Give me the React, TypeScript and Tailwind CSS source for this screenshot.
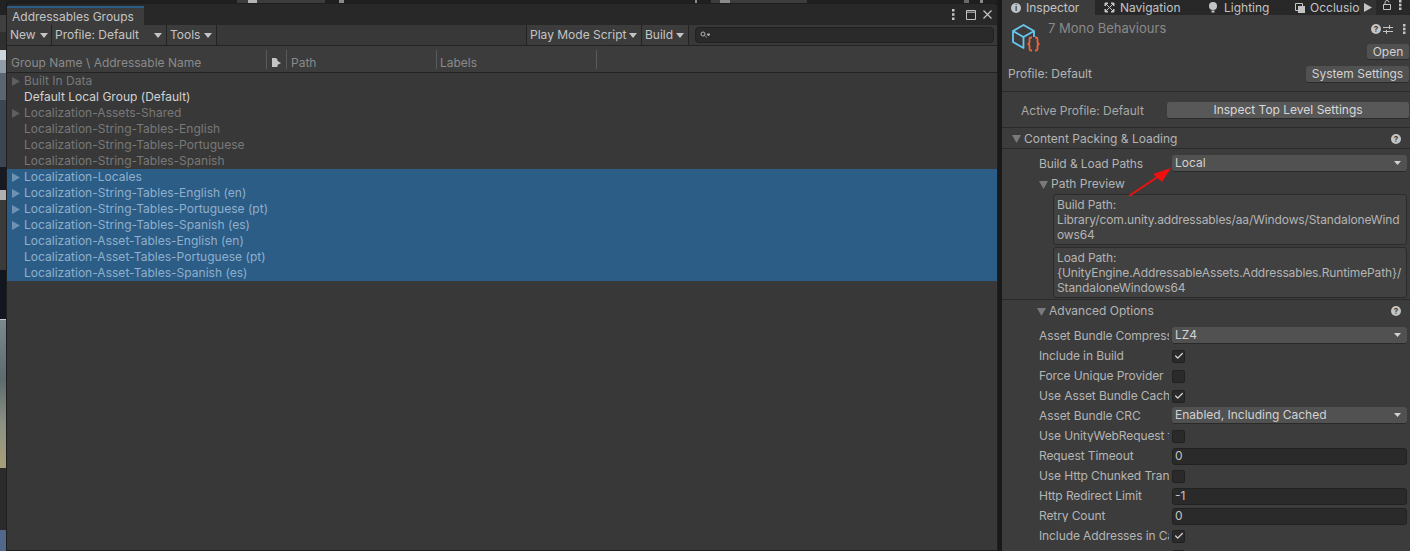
import type { ReactNode } from 'react';
import { Check } from 'lucide-react';

const font = { fontFamily: 'Inter, "Noto Sans", sans-serif' };

function Caret({ className = '', small }: { className?: string; small?: boolean }) {
  return (
    <svg width={small ? 7 : 8} height={small ? 4 : 5} viewBox="0 0 8 5" preserveAspectRatio="none" className={`shrink-0 ${className}`}>
      <path d="M0 0h8L4 5z" fill="currentColor" />
    </svg>
  );
}

function Foldout({ open, className = '' }: { open?: boolean; className?: string }) {
  return (
    <svg width="9" height="9" viewBox="0 0 9 9" className={`shrink-0 ${className}`}>
      <path d={open ? 'M0 1h9L4.5 9z' : 'M0 0l8 4.5L0 9z'} fill="currentColor" />
    </svg>
  );
}

function HelpIcon() {
  return (
    <span className="flex h-[10px] w-[10px] items-center justify-center rounded-full bg-[#c4c4c4] text-[8px] font-bold leading-none text-[#3c3c3c]">
      ?
    </span>
  );
}

function ToolButton({ label, width, spread }: { label: string; width: string; spread?: boolean }) {
  return (
    <div className={`flex h-full items-center border-r border-[#232323] bg-[#3c3c3c] pl-[3px] pr-[4px] text-[#c4c4c4] ${width} ${spread ? 'justify-between' : 'gap-[4px]'}`}>
      <span>{label}</span>
      <Caret />
    </div>
  );
}

const groups = [
  { name: 'Built In Data', arrow: true },
  { name: 'Default Local Group (Default)', bright: true },
  { name: 'Localization-Assets-Shared', arrow: true },
  { name: 'Localization-String-Tables-English' },
  { name: 'Localization-String-Tables-Portuguese' },
  { name: 'Localization-String-Tables-Spanish' },
  { name: 'Localization-Locales', arrow: true, selected: true },
  { name: 'Localization-String-Tables-English (en)', arrow: true, selected: true },
  { name: 'Localization-String-Tables-Portuguese (pt)', arrow: true, selected: true },
  { name: 'Localization-String-Tables-Spanish (es)', arrow: true, selected: true },
  { name: 'Localization-Asset-Tables-English (en)', selected: true },
  { name: 'Localization-Asset-Tables-Portuguese (pt)', selected: true },
  { name: 'Localization-Asset-Tables-Spanish (es)', selected: true },
];

function GroupRow({ name, arrow, bright, selected }: { name: string; arrow?: boolean; bright?: boolean; selected?: boolean }) {
  return (
    <div className={`flex h-4 items-center ${selected ? 'bg-[#2c5d87] text-[#8fb0cc]' : bright ? 'text-[#d2d2d2]' : 'text-[#787878]'}`}>
      <div className="flex w-[17px] pl-[5px]">
        {arrow && <Foldout className={selected ? 'text-[#6d93b4]' : 'text-[#5f5f5f]'} />}
      </div>
      <span className="tracking-[0.02px]">{name}</span>
    </div>
  );
}

function Tab({ label, icon, active, width }: { label: string; icon: ReactNode; active?: boolean; width: string }) {
  return (
    <div className={`flex h-full shrink-0 items-center gap-[5px] overflow-hidden pl-[9px] text-[#c4c4c4] ${width} ${active ? 'bg-[#3c3c3c]' : 'bg-[#282828]'}`}>
      {icon}
      <span className="whitespace-nowrap">{label}</span>
    </div>
  );
}

function Label({ children }: { children: ReactNode }) {
  return <div className="mr-[3px] w-[130px] shrink-0 overflow-hidden whitespace-nowrap tracking-[-0.1px] text-[#b4b4b4]">{children}</div>;
}

function Select({ value }: { value: string }) {
  return (
    <div className="-mt-[2px] flex h-[17px] flex-1 items-center justify-between rounded-[3px] border-b border-[#2a2a2a] bg-[#515151] pl-[3px] pr-[6px] text-[#d2d2d2]">
      <span>{value}</span>
      <Caret small className="text-[#d2d2d2]" />
    </div>
  );
}

function Toggle({ on }: { on?: boolean }) {
  return (
    <div className="flex h-[13px] w-[13px] items-center justify-center rounded-[2px] border border-[#212121] bg-[#2a2a2a]">
      {on && <Check size={10} strokeWidth={3} className="text-[#d8d8d8]" />}
    </div>
  );
}

function NumberField({ value }: { value: string }) {
  return (
    <div className="flex h-[17px] flex-1 items-center rounded-[3px] border border-[#212121] bg-[#2a2a2a] pl-[2px] text-[#c4c4c4]">
      {value}
    </div>
  );
}

function Row({ label, children }: { label: string; children: ReactNode }) {
  return (
    <div className="flex h-5 shrink-0 items-center pl-[37px] pr-[3px]">
      <Label>{label}</Label>
      <div className="flex min-w-0 flex-1 items-center">{children}</div>
    </div>
  );
}

function PathBox({ lines }: { lines: string[] }) {
  return (
    <div className="ml-[51px] mr-[3px] flex h-[51px] flex-col justify-center rounded-[3px] border border-[#2b2b2b] bg-[#414141] pl-[3px] leading-[15px] tracking-[-0.12px] text-[#b4b4b4]">
      {lines.map((line) => (
        <div key={line} className="whitespace-nowrap">{line}</div>
      ))}
    </div>
  );
}

export default function App() {
  return (
    <div style={font} className="relative flex h-[551px] w-[1410px] overflow-hidden bg-[#191919] text-[12px] leading-none">
      {/* scene view peeking out on the left */}
      <div className="flex w-[6px] shrink-0 flex-col">
        <div className="h-[15px] bg-[#222222]" />
        <div className="h-[17px] bg-[#404040]" />
        <div className="h-[18px] bg-[#303030]" />
        <div className="h-[10px] bg-[#cdd6dc]" />
        <div className="h-[13px] bg-[#8f9ca6]" />
        <div className="h-[27px] bg-[#5a6570]" />
        <div className="h-[67px] bg-[#3c4652]" />
        <div className="h-[23px] bg-[#171a22]" />
        <div className="h-[10px] bg-[#b0b0b0]" />
        <div className="h-[70px] bg-[#3a3a3a]" />
        <div className="h-[49px] bg-[#12161f]" />
        <div className="h-[1px] bg-[#c9c9c9]" />
        <div className="h-[148px] bg-[linear-gradient(180deg,#7b8a8c,#5c6b6e_40%,#8b9184_70%,#a89f78)]" />
        <div className="h-[62px] bg-[#2b2b2b]" />
        <div className="flex-1 bg-[#51688a]" />
      </div>

      {/* Addressables Groups window */}
      <div className="flex w-[992px] shrink-0 flex-col">
        <div className="flex h-[3px] shrink-0 overflow-hidden bg-[#1f1f1f] pl-[231px]">
          <div className="h-full w-[88px] bg-[#3c3c3c] pl-[11px]">
            <div className="h-full w-[9px] bg-[#b4b4b4]" />
          </div>
          <div className="ml-[14px] h-full w-[5px] bg-[#8a8a8a]" />
          <div className="ml-[351px] h-full w-[2px] bg-[#8a8a8a]" />
          <div className="ml-[14px] h-full w-[96px] bg-[#3c3c3c] pl-[9px]">
            <div className="h-full w-[10px] bg-[#8a8a8a]" />
          </div>
          <div className="ml-[157px] h-full w-[5px] bg-[#6a6a6a]" />
          <div className="ml-[11px] h-full w-[3px] bg-[#8a8a8a]" />
        </div>
        <div className="flex flex-1 flex-col overflow-hidden rounded-t-[5px] border border-[#1e1e1e] bg-[#383838]">
          <div className="flex h-[21px] shrink-0 bg-[#282828]">
            <div className="mt-[2px] flex w-[137px] flex-col bg-[#3c3c3c] text-[#c4c4c4]">
              <div className="h-[2px] bg-[#2c5d87]" />
              <div className="flex flex-1 items-center pl-[5px]">Addressables Groups</div>
            </div>
            <div className="ml-auto flex items-center gap-[7px] pr-[5px] text-[#c4c4c4]">
              <svg width="3" height="11" viewBox="0 0 3 11"><path d="M0 0h2.500v2.500H0zM0 4.200h2.500v2.500H0zM0 8.400h2.500v2.500H0z" fill="currentColor" /></svg>
              <svg width="10" height="10" viewBox="0 0 10 10" className="ml-[4px]"><path d="M.5.5h9v9h-9zM.5 2.200h9" fill="none" stroke="currentColor" /></svg>
              <svg width="9" height="9" viewBox="0 0 9 9"><path d="M.5.5l8 8M8.500.5l-8 8" stroke="currentColor" strokeWidth="1.200" /></svg>
            </div>
          </div>
          <div className="flex h-[21px] shrink-0 items-stretch border-b border-[#232323] bg-[#383838]">
            <ToolButton label="New" width="w-[45px]" />
            <ToolButton label="Profile: Default" width="w-[115px]" spread />
            <ToolButton label="Tools" width="w-[50px]" />
            <div className="ml-[309px] flex h-full w-[116px] items-center gap-[3px] border-x border-[#232323] bg-[#3c3c3c] pl-[3px] text-[#c4c4c4]">
              <span>Play Mode Script</span>
              <Caret />
            </div>
            <div className="flex h-full w-[47px] items-center gap-[3px] border-r border-[#232323] bg-[#3c3c3c] pl-[3px] text-[#c4c4c4]">
              <span>Build</span>
              <Caret />
            </div>
            <div className="my-[2px] ml-[6px] mr-[3px] flex flex-1 items-center rounded-[4px] border border-[#212121] bg-[#2a2a2a] pl-[4px] text-[#b4b4b4]">
              <svg width="10" height="8" viewBox="0 0 10 8"><circle cx="3" cy="3" r="2" fill="none" stroke="currentColor" /><path d="M4.500 4.500L7 6.500M7 3h3L8.500 5z" stroke="currentColor" strokeWidth=".7" fill="currentColor" /></svg>
            </div>
          </div>
          <div className="flex h-[27px] shrink-0 items-stretch border-b border-[#232323] bg-[#3c3c3c] pb-[3px] pt-[4px] text-[#8a8a8a]">
            <div className="flex w-[259px] items-end pl-[4px]">Group Name \ Addressable Name</div>
            <div className="flex w-[21px] items-center justify-center border-x border-[#5a5a5a] pt-[5px] text-[#c4c4c4]">
              <svg width="9" height="9" viewBox="0 0 9 9"><path d="M0 0h4l1.500 1.500V3L9 5 5.500 7v2H0z" fill="currentColor" /></svg>
            </div>
            <div className="flex w-[149px] items-end pl-[4px]">Path</div>
            <div className="flex w-[161px] items-end border-x border-[#5a5a5a] pl-[3px]">Labels</div>
          </div>
          <div className="flex-1">
            {groups.map((g) => (
              <GroupRow key={g.name} {...g} />
            ))}
          </div>
        </div>
      </div>

      <div className="w-[4px] shrink-0 bg-[#191919]" />

      {/* Inspector */}
      <div className="flex min-w-0 flex-1 flex-col bg-[#3c3c3c]">
        <div className="flex h-[15px] shrink-0 items-center bg-[#282828]">
          <Tab width="w-[93px]" active label="Inspector" icon={<span className="flex h-[10px] w-[10px] items-center justify-center rounded-full bg-[#c4c4c4] text-[8px] font-bold text-[#3c3c3c]">i</span>} />
          <Tab width="w-[104px]" label="Navigation" icon={<svg width="11" height="11" viewBox="0 0 11 11"><path d="M1 1h3L1 4zM10 1v3L7 1zM1 10V7l3 3zM10 10H7l3-3zM2 2l7 7M9 2L2 9" fill="#c4c4c4" stroke="#c4c4c4" /></svg>} />
          <Tab width="w-[87px]" label="Lighting" icon={<svg width="10" height="11" viewBox="0 0 10 11" className="mr-[1px]"><circle cx="5" cy="4" r="4" fill="#c4c4c4" /><path d="M3.500 8.500h3v2h-3z" fill="#c4c4c4" /></svg>} />
          <Tab width="w-[74px]" label="Occlusion" icon={<svg width="10" height="10" viewBox="0 0 10 10" className="shrink-0"><path d="M.5.5h7v7h-7z" fill="none" stroke="#c4c4c4" /><path d="M3 3h7v7H3z" fill="#c4c4c4" /></svg>} />
          <div className="flex h-full w-[16px] shrink-0 items-center justify-center bg-[#333333] text-[#c4c4c4]"><Foldout /></div>
          <svg width="9" height="10" viewBox="0 0 9 10" className="-mt-[5px] ml-[7px] shrink-0 text-[#c4c4c4]"><path d="M.5 4.500h7v5h-7zM2 4.500V2.500a2 2 0 014 0" fill="none" stroke="currentColor" /></svg>
          <svg width="3" height="10" viewBox="0 0 3 10" className="-mt-[5px] ml-[7px] shrink-0 text-[#c4c4c4]"><path d="M0 0h2.500v2.500H0zM0 3.800h2.500v2.500H0zM0 7.500h2.500V10H0z" fill="currentColor" /></svg>
        </div>

        <div className="flex h-[45px] shrink-0 pl-[9px] pr-[1px]">
          <svg width="30" height="30" viewBox="0 0 30 30" className="mt-[8px] shrink-0">
            <path d="M2 8L12.500 2L23 8L12.500 14ZM2 8V19L12.500 25V14M23 8V14" fill="none" stroke="#66c8f0" strokeWidth="1.800" strokeLinejoin="round" />
            <path d="M21 14.500h-1q-1.500 0-1.500 1.500v3q0 2-2 2q2 0 2 2v3q0 1.500 1.500 1.500h1M24 14.500h1q1.500 0 1.500 1.500v3q0 2 2 2q-2 0-2 2v3q0 1.500-1.500 1.500h-1" fill="none" stroke="#f0623c" strokeWidth="1.800" />
          </svg>
          <div className="ml-[7px] mt-[7px] text-[13px] leading-[13px] text-[#8a8a8a]">7 Mono Behaviours</div>
          <div className="ml-auto flex flex-col items-end">
            <div className="mr-[3px] mt-[9px] flex items-center gap-[2px] text-[#c4c4c4]">
              <HelpIcon />
              <svg width="10" height="9" viewBox="0 0 10 9"><path d="M0 2.500h10M0 6.500h10M6.500 0v4M3.500 5v4" stroke="currentColor" /></svg>
              <svg width="3" height="10" viewBox="0 0 3 10" className="ml-[8px]"><path d="M0 0h2.500v2.500H0zM0 3.800h2.500v2.500H0zM0 7.500h2.500V10H0z" fill="currentColor" /></svg>
            </div>
            <div className="mt-[10px] flex h-[16px] w-[42px] items-center justify-center rounded-[3px] border-b border-[#2a2a2a] bg-[#515151] text-[#d2d2d2]">Open</div>
          </div>
        </div>
        <div className="flex h-[32px] shrink-0 items-start border-b border-[#2a2a2a] pl-[6px] pr-[1px] pt-[6px]">
          <span className="mt-[2px] text-[#b4b4b4]">Profile: Default</span>
          <div className="ml-auto flex h-[17px] w-[103px] items-center justify-center rounded-[3px] border-b border-[#2a2a2a] bg-[#515151] text-[#d2d2d2]">System Settings</div>
        </div>
        <div className="flex h-[36px] shrink-0 items-center border-b border-[#2a2a2a] pl-[19px] pr-[1px] pt-[2px]">
          <span className="w-[146px] text-[#a8a8a8]">Active Profile: Default</span>
          <div className="flex h-[17px] flex-1 items-center justify-center rounded-[3px] border-b border-[#2a2a2a] bg-[#585858] text-[#d8d8d8]">Inspect Top Level Settings</div>
        </div>
        <div className="flex h-[21px] shrink-0 items-center border-b border-[#2a2a2a] pl-[10px] pr-[9px] pt-[1px] text-[#b4b4b4]">
          <Foldout open className="text-[#7a7a7a]" />
          <span className="ml-[3px]">Content Packing &amp; Loading</span>
          <span className="ml-auto"><HelpIcon /></span>
        </div>
        <div className="mt-[5px]">
          <Row label="Build &amp; Load Paths"><Select value="Local" /></Row>
        </div>
        <div className="flex h-5 shrink-0 items-center pl-[37px] text-[#b4b4b4]">
          <Foldout open className="text-[#7a7a7a]" />
          <span className="ml-[3px]">Path Preview</span>
        </div>
        <div className="flex shrink-0 flex-col gap-[2px] border-b border-[#2a2a2a] pb-[1px]">
          <PathBox lines={['Build Path:', 'Library/com.unity.addressables/aa/Windows/StandaloneWind', 'ows64']} />
          <PathBox lines={['Load Path:', '{UnityEngine.AddressableAssets.Addressables.RuntimePath}/', 'StandaloneWindows64']} />
        </div>
        <div className="flex h-[22px] shrink-0 items-center pl-[35px] pr-[9px] text-[#b4b4b4]">
          <Foldout open className="text-[#7a7a7a]" />
          <span className="ml-[3px]">Advanced Options</span>
          <span className="ml-auto"><HelpIcon /></span>
        </div>
        <div className="mt-[4px] flex flex-col">
          <Row label="Asset Bundle Compression"><Select value="LZ4" /></Row>
          <Row label="Include in Build"><Toggle on /></Row>
          <Row label="Force Unique Provider"><Toggle /></Row>
          <Row label="Use Asset Bundle Cache"><Toggle on /></Row>
          <Row label="Asset Bundle CRC"><Select value="Enabled, Including Cached" /></Row>
          <Row label="Use UnityWebRequest for Local"><Toggle /></Row>
          <Row label="Request Timeout"><NumberField value="0" /></Row>
          <Row label="Use Http Chunked Transfer"><Toggle /></Row>
          <Row label="Http Redirect Limit"><NumberField value="-1" /></Row>
          <Row label="Retry Count"><NumberField value="0" /></Row>
          <Row label="Include Addresses in Catalog"><Toggle on /></Row>
          <Row label=""><Toggle /></Row>
        </div>
      </div>

      {/* annotation arrow */}
      <svg width="46" height="34" viewBox="0 0 46 34" className="absolute left-[1127px] top-[166px]">
        <path d="M2 30L32 10" stroke="#f01010" strokeWidth="2" />
        <path d="M44 2L26 8l9 8z" fill="#f01010" />
      </svg>
    </div>
  );
}
